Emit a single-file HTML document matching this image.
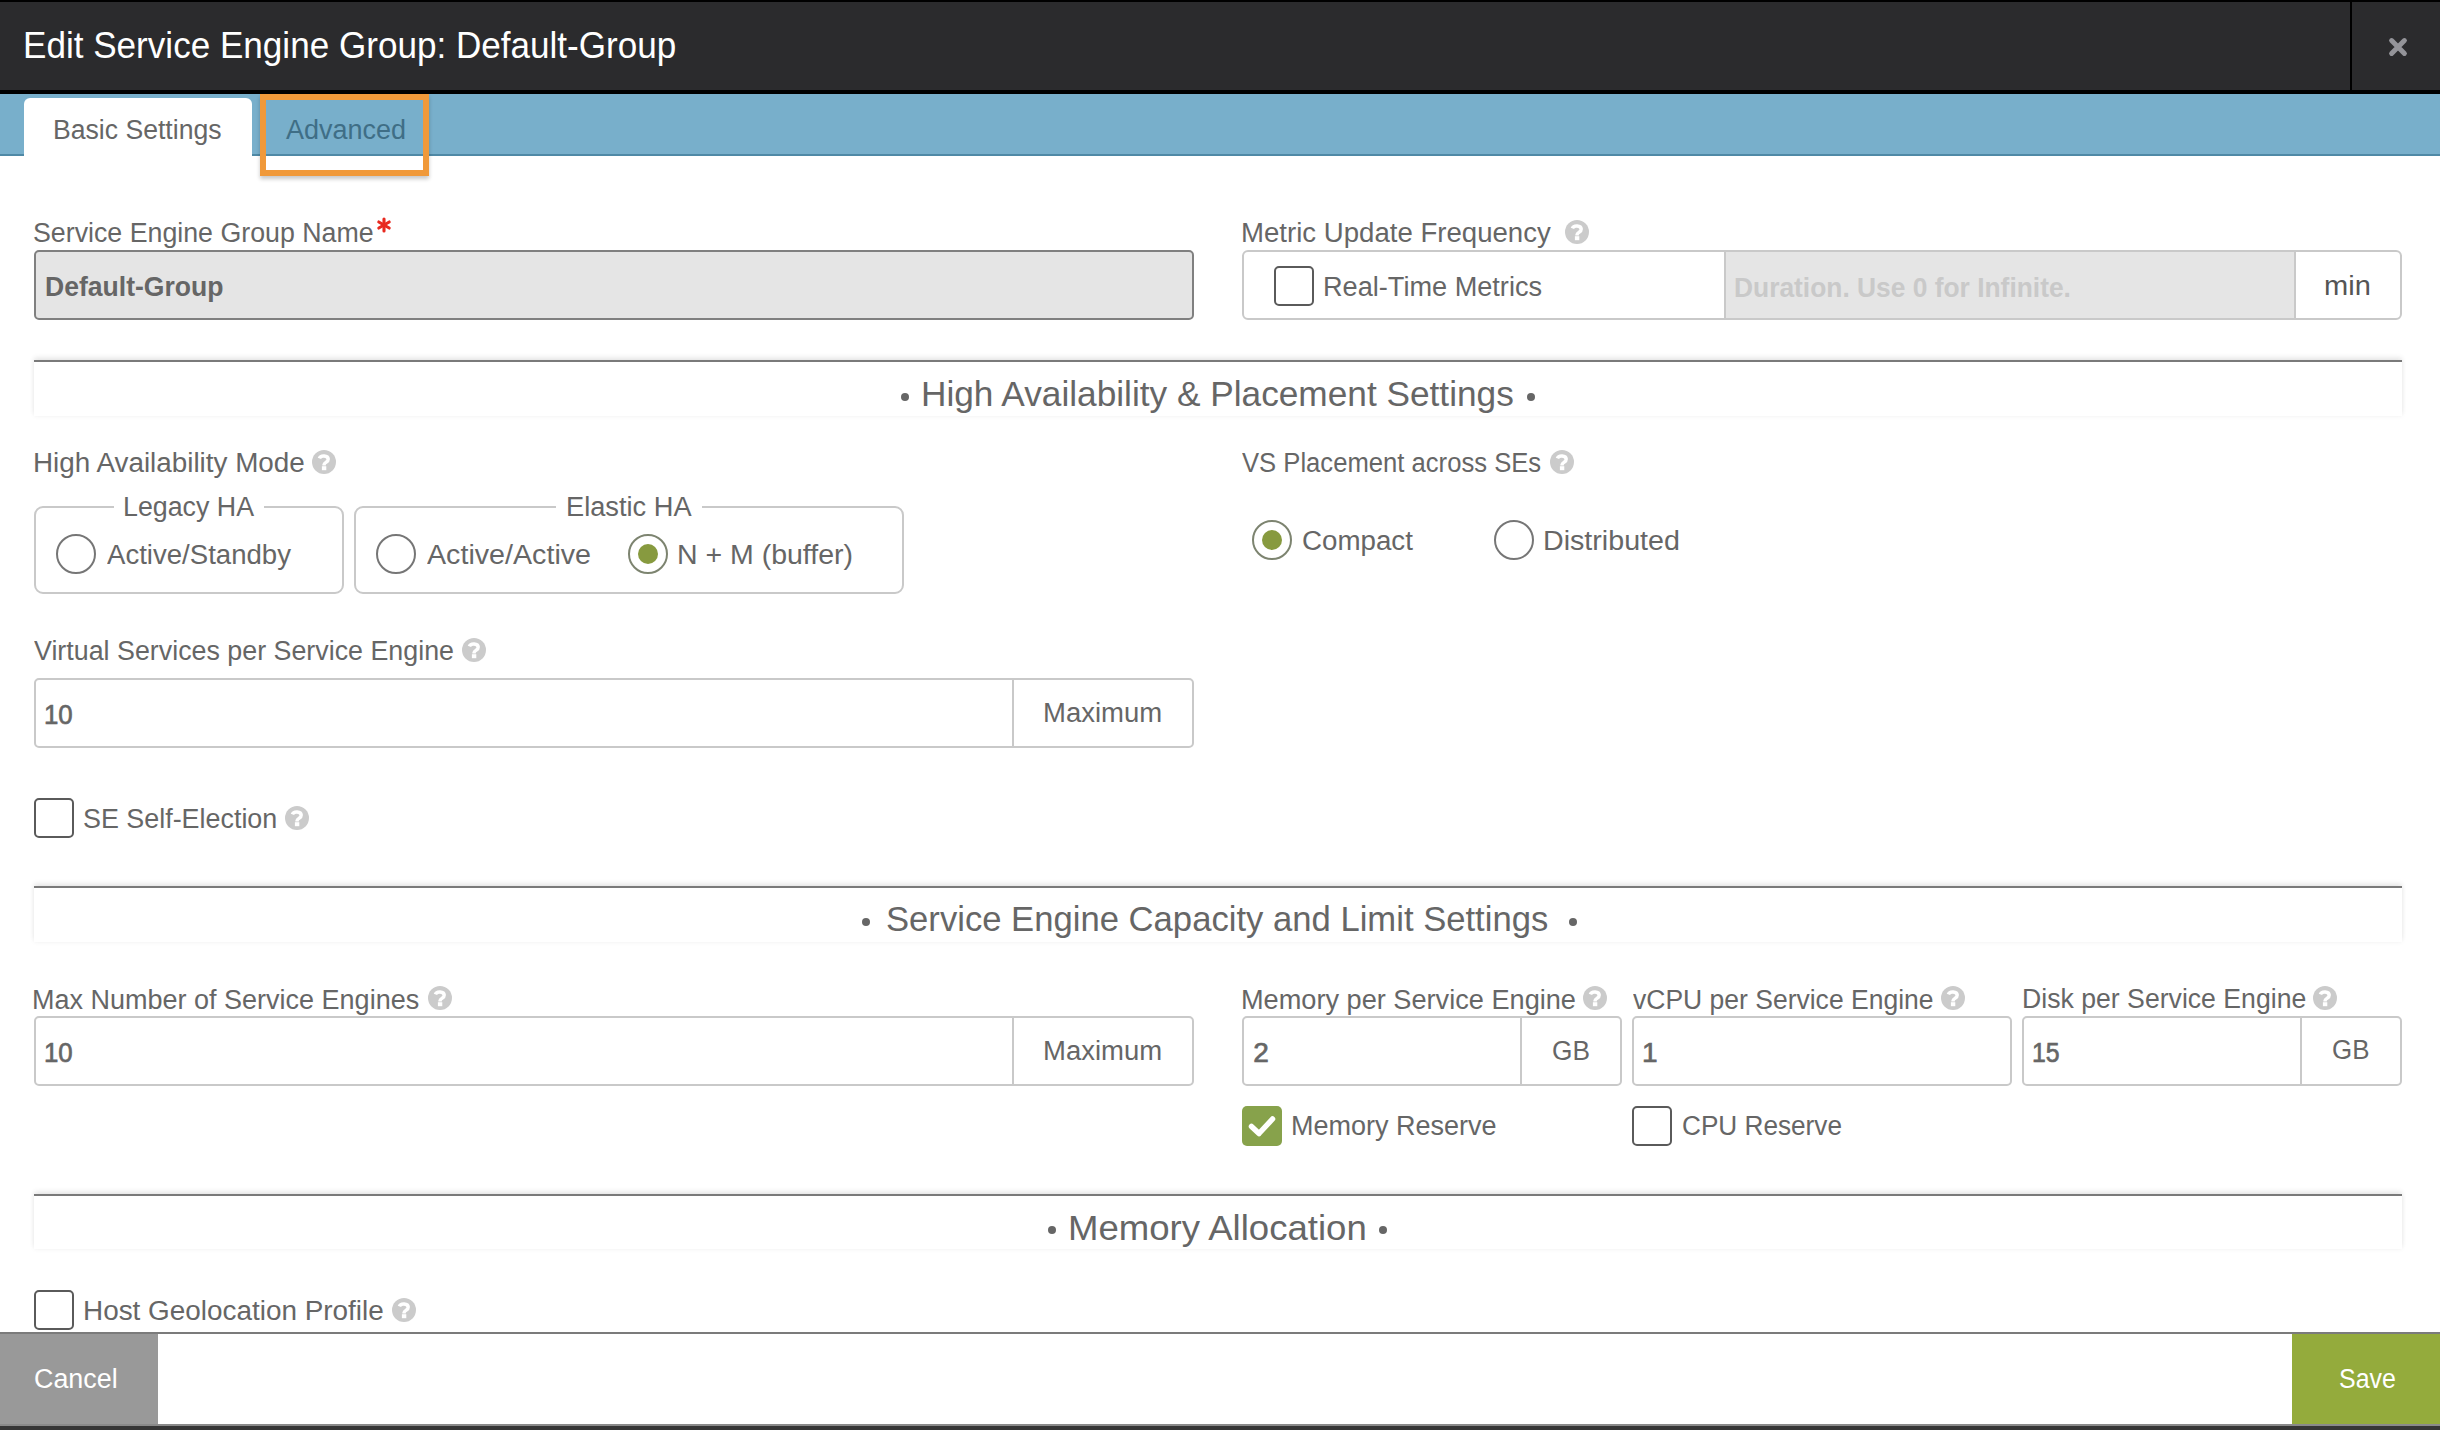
<!DOCTYPE html>
<html><head><meta charset="utf-8"><style>
html,body{margin:0;padding:0;width:2440px;height:1430px;overflow:hidden;background:#fff;}
body{position:relative;font-family:"Liberation Sans",sans-serif;color:#666;}
.a{position:absolute;}
.t{position:absolute;white-space:nowrap;line-height:1;color:#666;}
.box{position:absolute;box-sizing:border-box;border:2px solid #c9c9c9;border-radius:5px;background:#fff;}
.help{position:absolute;width:24px;height:24px;border-radius:50%;background:#cfcfcf;overflow:hidden;}
.help:after{content:"?";position:absolute;left:0;top:1px;width:24px;height:24px;line-height:24px;text-align:center;color:#fff;font-weight:700;font-size:18px;font-family:"Liberation Sans",sans-serif;}
.cb{position:absolute;box-sizing:border-box;width:40px;height:40px;border:2px solid #5a5a5a;border-radius:5px;background:#fff;}
.cbon{position:absolute;width:40px;height:40px;border-radius:5px;background:#87a24b;}
.rd{position:absolute;box-sizing:border-box;width:40px;height:40px;border:2px solid #767676;border-radius:50%;background:#fff;}
.rd.on{border-color:#7d8470;}
.rd.on:after{content:"";position:absolute;left:8px;top:8px;width:20px;height:20px;border-radius:50%;background:#879a3f;}
.sec{position:absolute;left:34px;width:2368px;box-sizing:border-box;border-top:2px solid #7a7a7a;background:#fff;box-shadow:0 -3px 5px rgba(0,0,0,0.07),0 0 5px rgba(0,0,0,0.06);}
</style></head>
<body>
<div class="a" style="left:0;top:0;width:2440px;height:94px;background:#2b2b2d;border-top:2px solid #000;border-bottom:4px solid #000;box-sizing:border-box"></div>
<div class="a" style="left:2350px;top:2px;width:2px;height:88px;background:#000"></div>
<svg class="a" style="left:2388px;top:37px" width="20" height="20" viewBox="0 0 20 20"><path d="M3.6 3.6 L16.4 16.4 M16.4 3.6 L3.6 16.4" stroke="#949499" stroke-width="5" stroke-linecap="round"/></svg>
<div class="a" style="left:0;top:94px;width:2440px;height:62px;background:#78afcb;border-bottom:2px solid #4f89a6;box-sizing:border-box"></div>
<div class="a" style="left:24px;top:98px;width:228px;height:58px;background:#fff;border-radius:6px 6px 0 0"></div>
<div class="a" style="left:260px;top:94px;width:169px;height:82px;box-sizing:border-box;border:6px solid #f0993a;box-shadow:0 3px 4px rgba(0,0,0,0.22)"></div>
<div class="box" style="left:34px;top:250px;width:1160px;height:70px;border-color:#808080;background:#e5e5e5;border-radius:5px"></div>
<svg class="a" style="left:374px;top:215px" width="20" height="20" viewBox="0 0 20 20"><g stroke="#e8291f" stroke-width="3.1" stroke-linecap="round"><path d="M10 4 V16"/><path d="M4.8 7 L15.2 13"/><path d="M15.2 7 L4.8 13"/></g></svg>
<div class="box" style="left:1242px;top:250px;width:1160px;height:70px;border-radius:6px"></div>
<div class="a" style="left:1726px;top:252px;width:569px;height:66px;background:#e5e5e5"></div>
<div class="a" style="left:1724px;top:252px;width:2px;height:66px;background:#c9c9c9"></div>
<div class="a" style="left:2294px;top:252px;width:2px;height:66px;background:#c9c9c9"></div>
<div class="cb" style="left:1274px;top:266px"></div>
<svg class="a" style="left:1565px;top:220px" width="24" height="24" viewBox="0 0 24 24"><circle cx="12" cy="12" r="12" fill="#cbcbcb"/><path d="M7.4 8.4 C8.6 5 15.9 5 16.2 9.2 C16.4 12.2 12.3 12.4 12.1 14.6 V15.4" fill="none" stroke="#fff" stroke-width="3.5"/><rect x="9.9" y="16.2" width="4.4" height="4" fill="#fff"/></svg>
<div class="sec" style="top:360px;height:56px"></div>
<div class="a" style="left:901.0px;top:392.5px;width:8px;height:8px;border-radius:50%;background:#666"></div>
<div class="a" style="left:1527.0px;top:392.5px;width:8px;height:8px;border-radius:50%;background:#666"></div>
<svg class="a" style="left:312px;top:450px" width="24" height="24" viewBox="0 0 24 24"><circle cx="12" cy="12" r="12" fill="#cbcbcb"/><path d="M7.4 8.4 C8.6 5 15.9 5 16.2 9.2 C16.4 12.2 12.3 12.4 12.1 14.6 V15.4" fill="none" stroke="#fff" stroke-width="3.5"/><rect x="9.9" y="16.2" width="4.4" height="4" fill="#fff"/></svg>
<div class="box" style="left:34px;top:506px;width:310px;height:88px;border-radius:9px"></div>
<div class="a" style="left:114px;top:503px;width:150px;height:6px;background:#fff"></div>
<div class="box" style="left:354px;top:506px;width:550px;height:88px;border-radius:9px"></div>
<div class="a" style="left:556px;top:503px;width:146px;height:6px;background:#fff"></div>
<div class="rd" style="left:56px;top:534px"></div>
<div class="rd" style="left:376px;top:534px"></div>
<div class="rd on" style="left:628px;top:534px"></div>
<svg class="a" style="left:1550px;top:450px" width="24" height="24" viewBox="0 0 24 24"><circle cx="12" cy="12" r="12" fill="#cbcbcb"/><path d="M7.4 8.4 C8.6 5 15.9 5 16.2 9.2 C16.4 12.2 12.3 12.4 12.1 14.6 V15.4" fill="none" stroke="#fff" stroke-width="3.5"/><rect x="9.9" y="16.2" width="4.4" height="4" fill="#fff"/></svg>
<div class="rd on" style="left:1252px;top:520px"></div>
<div class="rd" style="left:1494px;top:520px"></div>
<svg class="a" style="left:462px;top:638px" width="24" height="24" viewBox="0 0 24 24"><circle cx="12" cy="12" r="12" fill="#cbcbcb"/><path d="M7.4 8.4 C8.6 5 15.9 5 16.2 9.2 C16.4 12.2 12.3 12.4 12.1 14.6 V15.4" fill="none" stroke="#fff" stroke-width="3.5"/><rect x="9.9" y="16.2" width="4.4" height="4" fill="#fff"/></svg>
<div class="box" style="left:34px;top:678px;width:1160px;height:70px;"></div>
<div class="a" style="left:1012px;top:680px;width:2px;height:66px;background:#c9c9c9"></div>
<div class="cb" style="left:34px;top:798px"></div>
<svg class="a" style="left:285px;top:806px" width="24" height="24" viewBox="0 0 24 24"><circle cx="12" cy="12" r="12" fill="#cbcbcb"/><path d="M7.4 8.4 C8.6 5 15.9 5 16.2 9.2 C16.4 12.2 12.3 12.4 12.1 14.6 V15.4" fill="none" stroke="#fff" stroke-width="3.5"/><rect x="9.9" y="16.2" width="4.4" height="4" fill="#fff"/></svg>
<div class="sec" style="top:886px;height:56px"></div>
<div class="a" style="left:862.0px;top:917.5px;width:8px;height:8px;border-radius:50%;background:#666"></div>
<div class="a" style="left:1569.0px;top:917.5px;width:8px;height:8px;border-radius:50%;background:#666"></div>
<svg class="a" style="left:428px;top:986px" width="24" height="24" viewBox="0 0 24 24"><circle cx="12" cy="12" r="12" fill="#cbcbcb"/><path d="M7.4 8.4 C8.6 5 15.9 5 16.2 9.2 C16.4 12.2 12.3 12.4 12.1 14.6 V15.4" fill="none" stroke="#fff" stroke-width="3.5"/><rect x="9.9" y="16.2" width="4.4" height="4" fill="#fff"/></svg>
<div class="box" style="left:34px;top:1016px;width:1160px;height:70px;"></div>
<div class="a" style="left:1012px;top:1018px;width:2px;height:66px;background:#c9c9c9"></div>
<svg class="a" style="left:1583px;top:986px" width="24" height="24" viewBox="0 0 24 24"><circle cx="12" cy="12" r="12" fill="#cbcbcb"/><path d="M7.4 8.4 C8.6 5 15.9 5 16.2 9.2 C16.4 12.2 12.3 12.4 12.1 14.6 V15.4" fill="none" stroke="#fff" stroke-width="3.5"/><rect x="9.9" y="16.2" width="4.4" height="4" fill="#fff"/></svg>
<div class="box" style="left:1242px;top:1016px;width:380px;height:70px;"></div>
<div class="a" style="left:1520px;top:1018px;width:2px;height:66px;background:#c9c9c9"></div>
<svg class="a" style="left:1941px;top:986px" width="24" height="24" viewBox="0 0 24 24"><circle cx="12" cy="12" r="12" fill="#cbcbcb"/><path d="M7.4 8.4 C8.6 5 15.9 5 16.2 9.2 C16.4 12.2 12.3 12.4 12.1 14.6 V15.4" fill="none" stroke="#fff" stroke-width="3.5"/><rect x="9.9" y="16.2" width="4.4" height="4" fill="#fff"/></svg>
<div class="box" style="left:1632px;top:1016px;width:380px;height:70px;"></div>
<svg class="a" style="left:2313px;top:986px" width="24" height="24" viewBox="0 0 24 24"><circle cx="12" cy="12" r="12" fill="#cbcbcb"/><path d="M7.4 8.4 C8.6 5 15.9 5 16.2 9.2 C16.4 12.2 12.3 12.4 12.1 14.6 V15.4" fill="none" stroke="#fff" stroke-width="3.5"/><rect x="9.9" y="16.2" width="4.4" height="4" fill="#fff"/></svg>
<div class="box" style="left:2022px;top:1016px;width:380px;height:70px;"></div>
<div class="a" style="left:2300px;top:1018px;width:2px;height:66px;background:#c9c9c9"></div>
<div class="cbon" style="left:1242px;top:1106px"><svg width="40" height="40" viewBox="0 0 40 40" style="position:absolute;left:0;top:0"><path d="M9.5 20.5 L17 27.5 L30.5 13" fill="none" stroke="#fff" stroke-width="5.5" stroke-linecap="round" stroke-linejoin="round"/></svg></div>
<div class="cb" style="left:1632px;top:1106px"></div>
<div class="sec" style="top:1194px;height:55px"></div>
<div class="a" style="left:1048.0px;top:1226.0px;width:8px;height:8px;border-radius:50%;background:#666"></div>
<div class="a" style="left:1379.0px;top:1226.0px;width:8px;height:8px;border-radius:50%;background:#666"></div>
<div class="cb" style="left:34px;top:1290px"></div>
<svg class="a" style="left:392px;top:1298px" width="24" height="24" viewBox="0 0 24 24"><circle cx="12" cy="12" r="12" fill="#cbcbcb"/><path d="M7.4 8.4 C8.6 5 15.9 5 16.2 9.2 C16.4 12.2 12.3 12.4 12.1 14.6 V15.4" fill="none" stroke="#fff" stroke-width="3.5"/><rect x="9.9" y="16.2" width="4.4" height="4" fill="#fff"/></svg>
<div class="a" style="left:0;top:1332px;width:2440px;height:2px;background:#7b7b7b"></div>
<div class="a" style="left:0;top:1334px;width:158px;height:90px;background:#999"></div>
<div class="a" style="left:2292px;top:1334px;width:148px;height:90px;background:#94ab3c"></div>
<div class="a" style="left:0;top:1424px;width:2440px;height:2px;background:#8a8a8a"></div>
<div class="a" style="left:0;top:1426px;width:2440px;height:4px;background:#363636"></div>
<div class="t" id="title" style="left:23.20px;top:28.20px;font-size:36px;font-weight:400;color:#fff;transform:scaleX(0.9746);transform-origin:0 0;">Edit Service Engine Group: Default-Group</div>
<div class="t" id="tab1" style="left:53.00px;top:117.00px;font-size:27px;font-weight:400;color:#666;transform:scaleX(0.9851);transform-origin:0 0;">Basic Settings</div>
<div class="t" id="tab2" style="left:286.00px;top:117.00px;font-size:27px;font-weight:400;color:#3f6e86;">Advanced</div>
<div class="t" id="l_name" style="left:33.00px;top:220.00px;font-size:27px;font-weight:400;color:#666;transform:scaleX(0.9912);transform-origin:0 0;">Service Engine Group Name</div>
<div class="t" id="v_name" style="left:45.00px;top:274.00px;font-size:27px;font-weight:700;color:#666;transform:scaleX(0.9832);transform-origin:0 0;">Default-Group</div>
<div class="t" id="l_metric" style="left:1241.20px;top:220.00px;font-size:27px;font-weight:400;color:#666;transform:scaleX(1.0219);transform-origin:0 0;">Metric Update Frequency</div>
<div class="t" id="rtm" style="left:1323.00px;top:274.00px;font-size:27px;font-weight:400;color:#666;transform:scaleX(1.0047);transform-origin:0 0;">Real-Time Metrics</div>
<div class="t" id="dur" style="left:1734.00px;top:274.50px;font-size:27px;font-weight:700;color:#c9c9c9;transform:scaleX(0.9765);transform-origin:0 0;">Duration. Use 0 for Infinite.</div>
<div class="t" id="min" style="left:2324.00px;top:273.00px;font-size:27px;font-weight:400;color:#555;transform:scaleX(1.0750);transform-origin:0 0;">min</div>
<div class="t" id="s1" style="left:920.80px;top:376.00px;font-size:35px;font-weight:400;color:#666;transform:scaleX(1.0067);transform-origin:0 0;">High Availability &amp; Placement Settings</div>
<div class="t" id="l_ha" style="left:33.00px;top:450.00px;font-size:27px;font-weight:400;color:#666;transform:scaleX(1.0310);transform-origin:0 0;">High Availability Mode</div>
<div class="t" id="leg" style="left:123.00px;top:494.00px;font-size:27px;font-weight:400;color:#666;transform:scaleX(0.9923);transform-origin:0 0;">Legacy HA</div>
<div class="t" id="as" style="left:106.80px;top:542.00px;font-size:27px;font-weight:400;color:#666;transform:scaleX(1.0217);transform-origin:0 0;">Active/Standby</div>
<div class="t" id="ela" style="left:566.00px;top:494.00px;font-size:27px;font-weight:400;color:#666;transform:scaleX(1.0083);transform-origin:0 0;">Elastic HA</div>
<div class="t" id="aa" style="left:427.20px;top:542.00px;font-size:27px;font-weight:400;color:#666;transform:scaleX(1.0614);transform-origin:0 0;">Active/Active</div>
<div class="t" id="nm" style="left:677.00px;top:542.00px;font-size:27px;font-weight:400;color:#666;transform:scaleX(1.0552);transform-origin:0 0;">N + M (buffer)</div>
<div class="t" id="l_vsp" style="left:1242.00px;top:450.00px;font-size:27px;font-weight:400;color:#666;transform:scaleX(0.9494);transform-origin:0 0;">VS Placement across SEs</div>
<div class="t" id="cmp" style="left:1302.00px;top:528.00px;font-size:27px;font-weight:400;color:#666;transform:scaleX(1.0262);transform-origin:0 0;">Compact</div>
<div class="t" id="dst" style="left:1543.20px;top:528.00px;font-size:27px;font-weight:400;color:#666;transform:scaleX(1.0608);transform-origin:0 0;">Distributed</div>
<div class="t" id="l_vps" style="left:34.00px;top:638.00px;font-size:27px;font-weight:400;color:#666;transform:scaleX(0.9936);transform-origin:0 0;">Virtual Services per Service Engine</div>
<div class="t" id="v10a" style="left:44.40px;top:700.80px;font-size:28px;font-weight:400;color:#666;transform:scaleX(0.9218);transform-origin:0 0;-webkit-text-stroke:0.7px #666;">10</div>
<div class="t" id="maxa" style="left:1043.40px;top:699.70px;font-size:27px;font-weight:400;color:#666;transform:scaleX(1.0186);transform-origin:0 0;">Maximum</div>
<div class="t" id="sese" style="left:83.40px;top:806.40px;font-size:27px;font-weight:400;color:#666;transform:scaleX(0.9958);transform-origin:0 0;">SE Self-Election</div>
<div class="t" id="s2" style="left:886.20px;top:901.40px;font-size:35px;font-weight:400;color:#666;transform:scaleX(0.9896);transform-origin:0 0;">Service Engine Capacity and Limit Settings</div>
<div class="t" id="l_max" style="left:32.00px;top:986.50px;font-size:27px;font-weight:400;color:#666;">Max Number of Service Engines</div>
<div class="t" id="v10b" style="left:44.40px;top:1038.90px;font-size:28px;font-weight:400;color:#666;transform:scaleX(0.9218);transform-origin:0 0;-webkit-text-stroke:0.7px #666;">10</div>
<div class="t" id="maxb" style="left:1043.40px;top:1037.80px;font-size:27px;font-weight:400;color:#666;transform:scaleX(1.0186);transform-origin:0 0;">Maximum</div>
<div class="t" id="l_mem" style="left:1240.60px;top:986.70px;font-size:27px;font-weight:400;color:#666;transform:scaleX(1.0055);transform-origin:0 0;">Memory per Service Engine</div>
<div class="t" id="l_cpu" style="left:1632.80px;top:986.70px;font-size:27px;font-weight:400;color:#666;transform:scaleX(0.9816);transform-origin:0 0;">vCPU per Service Engine</div>
<div class="t" id="l_dsk" style="left:2021.60px;top:986.30px;font-size:27px;font-weight:400;color:#666;transform:scaleX(0.9867);transform-origin:0 0;">Disk per Service Engine</div>
<div class="t" id="v2" style="left:1253.20px;top:1038.90px;font-size:28px;font-weight:400;color:#666;-webkit-text-stroke:0.7px #666;">2</div>
<div class="t" id="gba" style="left:1551.80px;top:1037.80px;font-size:27px;font-weight:400;color:#666;transform:scaleX(0.9730);transform-origin:0 0;">GB</div>
<div class="t" id="v1" style="left:1642.00px;top:1038.50px;font-size:28px;font-weight:400;color:#666;-webkit-text-stroke:0.7px #666;">1</div>
<div class="t" id="v15" style="left:2032.00px;top:1038.50px;font-size:28px;font-weight:400;color:#666;transform:scaleX(0.8861);transform-origin:0 0;-webkit-text-stroke:0.7px #666;">15</div>
<div class="t" id="gbb" style="left:2332.20px;top:1037.20px;font-size:27px;font-weight:400;color:#666;transform:scaleX(0.9589);transform-origin:0 0;">GB</div>
<div class="t" id="mres" style="left:1291.00px;top:1113.40px;font-size:27px;font-weight:400;color:#666;">Memory Reserve</div>
<div class="t" id="cres" style="left:1682.00px;top:1113.40px;font-size:27px;font-weight:400;color:#666;transform:scaleX(0.9693);transform-origin:0 0;">CPU Reserve</div>
<div class="t" id="s3" style="left:1068.20px;top:1209.80px;font-size:35px;font-weight:400;color:#666;transform:scaleX(1.0448);transform-origin:0 0;">Memory Allocation</div>
<div class="t" id="hgp" style="left:83.00px;top:1298.00px;font-size:27px;font-weight:400;color:#666;transform:scaleX(1.0330);transform-origin:0 0;">Host Geolocation Profile</div>
<div class="t" id="cancel" style="left:34.00px;top:1366.00px;font-size:27px;font-weight:400;color:#fff;transform:scaleX(0.9951);transform-origin:0 0;">Cancel</div>
<div class="t" id="save" style="left:2339.20px;top:1366.00px;font-size:27px;font-weight:400;color:#fff;transform:scaleX(0.9238);transform-origin:0 0;">Save</div>
</body></html>
